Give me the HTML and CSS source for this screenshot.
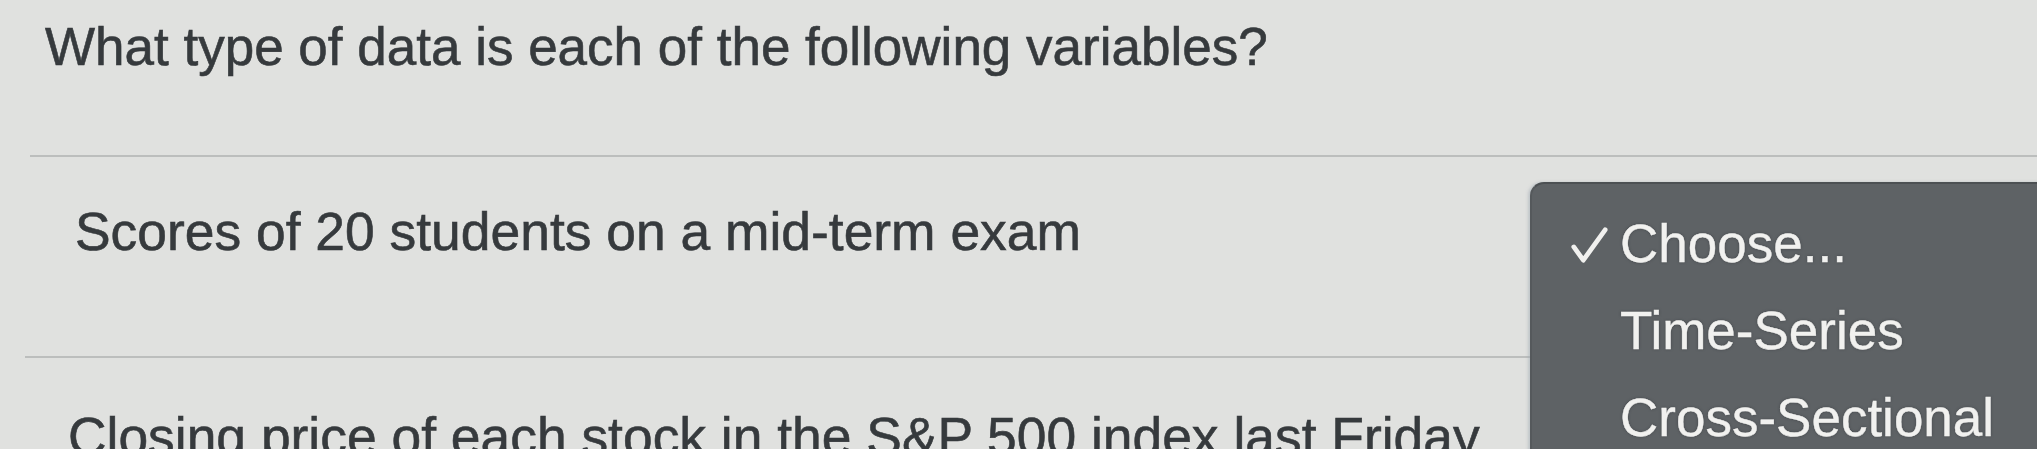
FILE: index.html
```html
<!DOCTYPE html>
<html>
<head>
<meta charset="utf-8">
<link rel="stylesheet" href="styles.css">
</head>
<body>
<div class="page">
  <h1 class="title">What type of data is each of the following variables?</h1>
  <div class="rule"></div>
  <div class="row">
    <div class="label">Scores of 20 students on a mid-term exam</div>
  </div>
  <div class="rule rule-2"></div>
  <div class="row row-2">
    <div class="label">Closing price of each stock in the S&amp;P 500 index last Friday</div>
  </div>
  <div class="menu">
    <div class="option">
      <span class="check"><svg width="38" height="38" viewBox="0 0 40 40"><path d="M4 22 L14 36 L37 4" fill="none" stroke="#f1f1ef" stroke-width="5" stroke-linecap="round" stroke-linejoin="round"/></svg></span>
      <span>Choose...</span>
    </div>
    <div class="option"><span class="check"></span><span>Time-Series</span></div>
    <div class="option"><span class="check"></span><span>Cross-Sectional</span></div>
  </div>
</div>
</body>
</html>
```

FILE: styles.css
```css
html, body {
  margin: 0;
  padding: 0;
  height: 100%;
  overflow: hidden;
}
body {
  background: #e0e1df;
  font-family: "Liberation Sans", Arial, sans-serif;
  color: #363a3d;
}
.page {
  position: relative;
  height: 449px;
  overflow: hidden;
}
.title {
  margin: 20px 0 0 45px;
  font-size: 53px;
  line-height: 53px;
  font-weight: normal;
  white-space: nowrap;
  -webkit-text-stroke: 0.6px currentColor;
}
.rule {
  height: 2px;
  background: #bcbebd;
  margin: 82px 0 0 30px;
}
.row {
  box-sizing: border-box;
  padding: 48px 0 0 75px;
  height: 199px;
}
.label {
  font-size: 53.4px;
  line-height: 53px;
  white-space: nowrap;
  -webkit-text-stroke: 0.6px currentColor;
}
.rule-2 {
  margin: 0 0 0 25px;
}
.row-2 {
  padding: 52px 0 0 68px;
}
.menu {
  position: absolute;
  left: 1530px;
  top: 182px;
  width: 560px;
  height: 320px;
  background: #5e6265;
  border-top: 2px solid #4c5053;
  border-left: 2px solid #55595c;
  border-radius: 14px;
  padding-top: 16px;
  box-sizing: border-box;
  box-shadow: -2px 0 3px rgba(160, 170, 180, 0.5);
}
.option {
  display: flex;
  align-items: center;
  height: 87px;
  font-size: 53px;
  color: #f1f1ef;
  text-shadow: 0 0 3px rgba(40, 44, 48, 0.6);
  white-space: nowrap;
  -webkit-text-stroke: 0.4px currentColor;
}
.check {
  width: 88px;
  height: 40px;
  box-sizing: border-box;
  padding-left: 38px;
  display: flex;
  align-items: flex-start;
}
.check svg {
  display: block;
  margin-top: 2px;
}
```
